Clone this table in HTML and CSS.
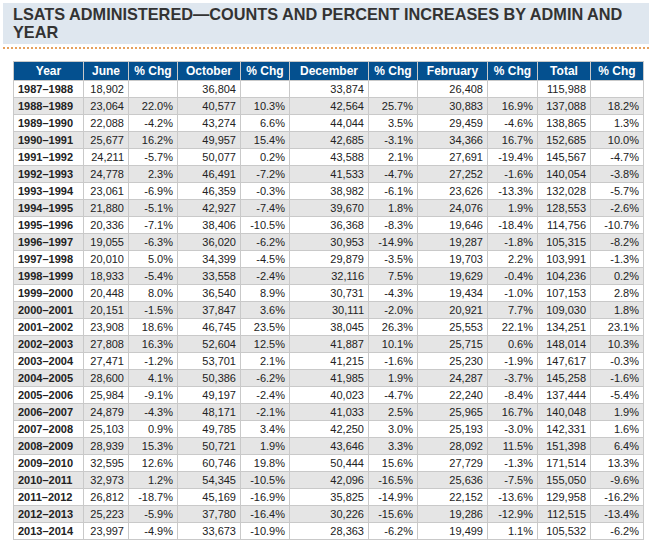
FILE: index.html
```html
<!DOCTYPE html>
<html>
<head>
<meta charset="utf-8">
<link rel="stylesheet" href="styles.css">
</head>
<body>
<div class="title-box">
  <h1 class="title">LSATS ADMINISTERED—COUNTS AND PERCENT INCREASES BY ADMIN AND YEAR</h1>
</div>
<div class="dots"></div>
<table class="data">
  <colgroup>
    <col class="c-year"><col class="c-june"><col class="c-p1"><col class="c-oct"><col class="c-p2"><col class="c-dec"><col class="c-p3"><col class="c-feb"><col class="c-p4"><col class="c-tot"><col class="c-p5">
  </colgroup>
  <thead>
    <tr><th>Year</th><th>June</th><th>% Chg</th><th>October</th><th>% Chg</th><th>December</th><th>% Chg</th><th>February</th><th>% Chg</th><th>Total</th><th>% Chg</th></tr>
  </thead>
  <tbody>
    <tr><td>1987–1988</td><td>18,902</td><td></td><td>36,804</td><td></td><td>33,874</td><td></td><td>26,408</td><td></td><td>115,988</td><td></td></tr>
    <tr><td>1988–1989</td><td>23,064</td><td>22.0%</td><td>40,577</td><td>10.3%</td><td>42,564</td><td>25.7%</td><td>30,883</td><td>16.9%</td><td>137,088</td><td>18.2%</td></tr>
    <tr><td>1989–1990</td><td>22,088</td><td>-4.2%</td><td>43,274</td><td>6.6%</td><td>44,044</td><td>3.5%</td><td>29,459</td><td>-4.6%</td><td>138,865</td><td>1.3%</td></tr>
    <tr><td>1990–1991</td><td>25,677</td><td>16.2%</td><td>49,957</td><td>15.4%</td><td>42,685</td><td>-3.1%</td><td>34,366</td><td>16.7%</td><td>152,685</td><td>10.0%</td></tr>
    <tr><td>1991–1992</td><td>24,211</td><td>-5.7%</td><td>50,077</td><td>0.2%</td><td>43,588</td><td>2.1%</td><td>27,691</td><td>-19.4%</td><td>145,567</td><td>-4.7%</td></tr>
    <tr><td>1992–1993</td><td>24,778</td><td>2.3%</td><td>46,491</td><td>-7.2%</td><td>41,533</td><td>-4.7%</td><td>27,252</td><td>-1.6%</td><td>140,054</td><td>-3.8%</td></tr>
    <tr><td>1993–1994</td><td>23,061</td><td>-6.9%</td><td>46,359</td><td>-0.3%</td><td>38,982</td><td>-6.1%</td><td>23,626</td><td>-13.3%</td><td>132,028</td><td>-5.7%</td></tr>
    <tr><td>1994–1995</td><td>21,880</td><td>-5.1%</td><td>42,927</td><td>-7.4%</td><td>39,670</td><td>1.8%</td><td>24,076</td><td>1.9%</td><td>128,553</td><td>-2.6%</td></tr>
    <tr><td>1995–1996</td><td>20,336</td><td>-7.1%</td><td>38,406</td><td>-10.5%</td><td>36,368</td><td>-8.3%</td><td>19,646</td><td>-18.4%</td><td>114,756</td><td>-10.7%</td></tr>
    <tr><td>1996–1997</td><td>19,055</td><td>-6.3%</td><td>36,020</td><td>-6.2%</td><td>30,953</td><td>-14.9%</td><td>19,287</td><td>-1.8%</td><td>105,315</td><td>-8.2%</td></tr>
    <tr><td>1997–1998</td><td>20,010</td><td>5.0%</td><td>34,399</td><td>-4.5%</td><td>29,879</td><td>-3.5%</td><td>19,703</td><td>2.2%</td><td>103,991</td><td>-1.3%</td></tr>
    <tr><td>1998–1999</td><td>18,933</td><td>-5.4%</td><td>33,558</td><td>-2.4%</td><td>32,116</td><td>7.5%</td><td>19,629</td><td>-0.4%</td><td>104,236</td><td>0.2%</td></tr>
    <tr><td>1999–2000</td><td>20,448</td><td>8.0%</td><td>36,540</td><td>8.9%</td><td>30,731</td><td>-4.3%</td><td>19,434</td><td>-1.0%</td><td>107,153</td><td>2.8%</td></tr>
    <tr><td>2000–2001</td><td>20,151</td><td>-1.5%</td><td>37,847</td><td>3.6%</td><td>30,111</td><td>-2.0%</td><td>20,921</td><td>7.7%</td><td>109,030</td><td>1.8%</td></tr>
    <tr><td>2001–2002</td><td>23,908</td><td>18.6%</td><td>46,745</td><td>23.5%</td><td>38,045</td><td>26.3%</td><td>25,553</td><td>22.1%</td><td>134,251</td><td>23.1%</td></tr>
    <tr><td>2002–2003</td><td>27,808</td><td>16.3%</td><td>52,604</td><td>12.5%</td><td>41,887</td><td>10.1%</td><td>25,715</td><td>0.6%</td><td>148,014</td><td>10.3%</td></tr>
    <tr><td>2003–2004</td><td>27,471</td><td>-1.2%</td><td>53,701</td><td>2.1%</td><td>41,215</td><td>-1.6%</td><td>25,230</td><td>-1.9%</td><td>147,617</td><td>-0.3%</td></tr>
    <tr><td>2004–2005</td><td>28,600</td><td>4.1%</td><td>50,386</td><td>-6.2%</td><td>41,985</td><td>1.9%</td><td>24,287</td><td>-3.7%</td><td>145,258</td><td>-1.6%</td></tr>
    <tr><td>2005–2006</td><td>25,984</td><td>-9.1%</td><td>49,197</td><td>-2.4%</td><td>40,023</td><td>-4.7%</td><td>22,240</td><td>-8.4%</td><td>137,444</td><td>-5.4%</td></tr>
    <tr><td>2006–2007</td><td>24,879</td><td>-4.3%</td><td>48,171</td><td>-2.1%</td><td>41,033</td><td>2.5%</td><td>25,965</td><td>16.7%</td><td>140,048</td><td>1.9%</td></tr>
    <tr><td>2007–2008</td><td>25,103</td><td>0.9%</td><td>49,785</td><td>3.4%</td><td>42,250</td><td>3.0%</td><td>25,193</td><td>-3.0%</td><td>142,331</td><td>1.6%</td></tr>
    <tr><td>2008–2009</td><td>28,939</td><td>15.3%</td><td>50,721</td><td>1.9%</td><td>43,646</td><td>3.3%</td><td>28,092</td><td>11.5%</td><td>151,398</td><td>6.4%</td></tr>
    <tr><td>2009–2010</td><td>32,595</td><td>12.6%</td><td>60,746</td><td>19.8%</td><td>50,444</td><td>15.6%</td><td>27,729</td><td>-1.3%</td><td>171,514</td><td>13.3%</td></tr>
    <tr><td>2010–2011</td><td>32,973</td><td>1.2%</td><td>54,345</td><td>-10.5%</td><td>42,096</td><td>-16.5%</td><td>25,636</td><td>-7.5%</td><td>155,050</td><td>-9.6%</td></tr>
    <tr><td>2011–2012</td><td>26,812</td><td>-18.7%</td><td>45,169</td><td>-16.9%</td><td>35,825</td><td>-14.9%</td><td>22,152</td><td>-13.6%</td><td>129,958</td><td>-16.2%</td></tr>
    <tr><td>2012–2013</td><td>25,223</td><td>-5.9%</td><td>37,780</td><td>-16.4%</td><td>30,226</td><td>-15.6%</td><td>19,286</td><td>-12.9%</td><td>112,515</td><td>-13.4%</td></tr>
    <tr><td>2013–2014</td><td>23,997</td><td>-4.9%</td><td>33,673</td><td>-10.9%</td><td>28,363</td><td>-6.2%</td><td>19,499</td><td>1.1%</td><td>105,532</td><td>-6.2%</td></tr>
  </tbody>
</table>
</body>
</html>
```

FILE: styles.css
```css
html, body {
  margin: 0;
  padding: 0;
  background: #ffffff;
}
body {
  font-family: "Liberation Sans", Arial, Helvetica, sans-serif;
  color: #222222;
  overflow: hidden;
}
.title-box {
  margin: 3px 0 0 3px;
  background: #dfe7ef;
  padding: 2px 10px 0 10px;
  height: 39px;
}
.title {
  margin: 0;
  font-size: 16.3px;
  line-height: 18px;
  font-weight: bold;
  color: #333333;
}
.dots {
  margin: 3px 0 0 3px;
  height: 0;
  border-top: 2px dotted #e6a05c;
}
.data {
  margin: 12px 0 0 13px;
  border-collapse: collapse;
  table-layout: fixed;
  width: 630px;
  font-size: 11px;
}
.c-year { width: 70px; }
.c-june { width: 45px; }
.c-p1 { width: 49px; }
.c-oct { width: 63px; }
.c-p2 { width: 49px; }
.c-dec { width: 79px; }
.c-p3 { width: 49px; }
.c-feb { width: 70px; }
.c-p4 { width: 50px; }
.c-tot { width: 53px; }
.c-p5 { width: 53px; }
.data th {
  background: #04508f;
  color: #ffffff;
  font-size: 12px;
  font-weight: bold;
  text-align: center;
  height: 18px;
  padding: 0;
  border: 1px solid #c9c9c9;
  line-height: 18px;
}
.data td {
  height: 16px;
  padding: 0 4px;
  line-height: 16px;
  text-align: right;
  border: 1px solid #c9c9c9;
  white-space: nowrap;
}
.data td:first-child {
  text-align: left;
  font-weight: bold;
  padding-left: 4px;
}
.data tbody tr:nth-child(even) td {
  background: #e5e5e5;
}
```
